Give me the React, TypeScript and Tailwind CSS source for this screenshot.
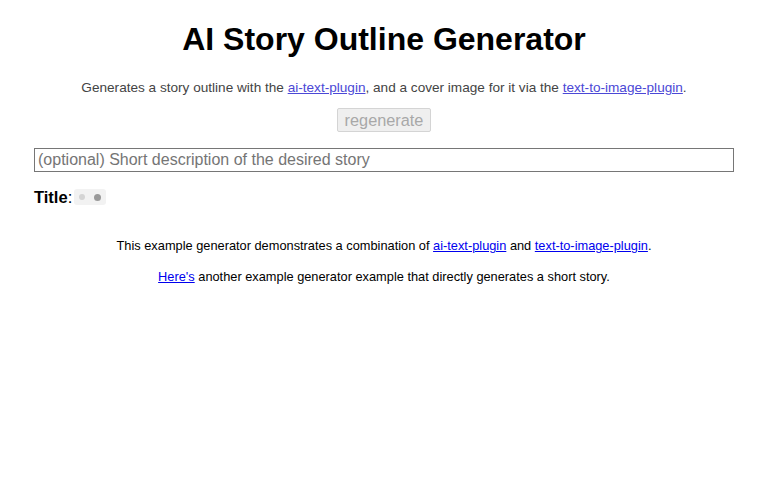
export default function App() {
  return (
    <div className="min-h-screen bg-white font-['Liberation_Sans',Arial,sans-serif] text-black">
      <div className="mx-auto w-[700px] pt-[19px]">
        {/* Header */}
        <h1 className="text-center text-[32px] leading-[40px] font-bold">AI Story Outline Generator</h1>
        <p className="mt-[19px] text-center text-[13.6px] leading-[20px] text-[#444]">
          Generates a story outline with the{" "}
          <a href="#" className="text-[#4b48d6] underline">ai-text-plugin</a>, and a cover image for it via the{" "}
          <a href="#" className="text-[#4b48d6] underline">text-to-image-plugin</a>.
        </p>
        <div className="mt-[10px] flex justify-center">
          <button className="h-[24px] rounded-[2px] border border-[#d4d4d4] bg-[#efefef] px-[7px] text-[16.3px] leading-[20px] text-[#a8a8a8]">
            regenerate
          </button>
        </div>

        {/* Input */}
        <input
          className="mt-[16px] block h-[24px] w-full border border-[#767676] px-[3px] text-[16px] leading-[20px] placeholder:text-[#757575] outline-none"
          placeholder="(optional) Short description of the desired story"
        />

        {/* Title */}
        <div className="mt-[14px] flex items-center text-[16.5px] leading-[22px]">
          <span className="font-bold">Title</span>
          <span>:</span>
          <span className="ml-[2px] flex h-[16px] w-[32px] items-center justify-center gap-[9px] rounded-[3px] bg-[#f2f2f2]">
            <span className="h-[6px] w-[6px] rounded-full bg-[#d4d4d4]" />
            <span className="h-[7px] w-[7px] rounded-full bg-[#9a9a9a]" />
          </span>
        </div>

        {/* Footer */}
        <p className="mt-[30px] text-center text-[12.8px] leading-[16px]">
          This example generator demonstrates a combination of{" "}
          <a href="#" className="text-[#0000ee] underline">ai-text-plugin</a> and{" "}
          <a href="#" className="text-[#0000ee] underline">text-to-image-plugin</a>.
        </p>
        <p className="mt-[15px] text-center text-[12.8px] leading-[16px]">
          <a href="#" className="text-[#0000ee] underline">Here's</a> another example generator example that directly generates a short story.
        </p>
      </div>
    </div>
  );
}
